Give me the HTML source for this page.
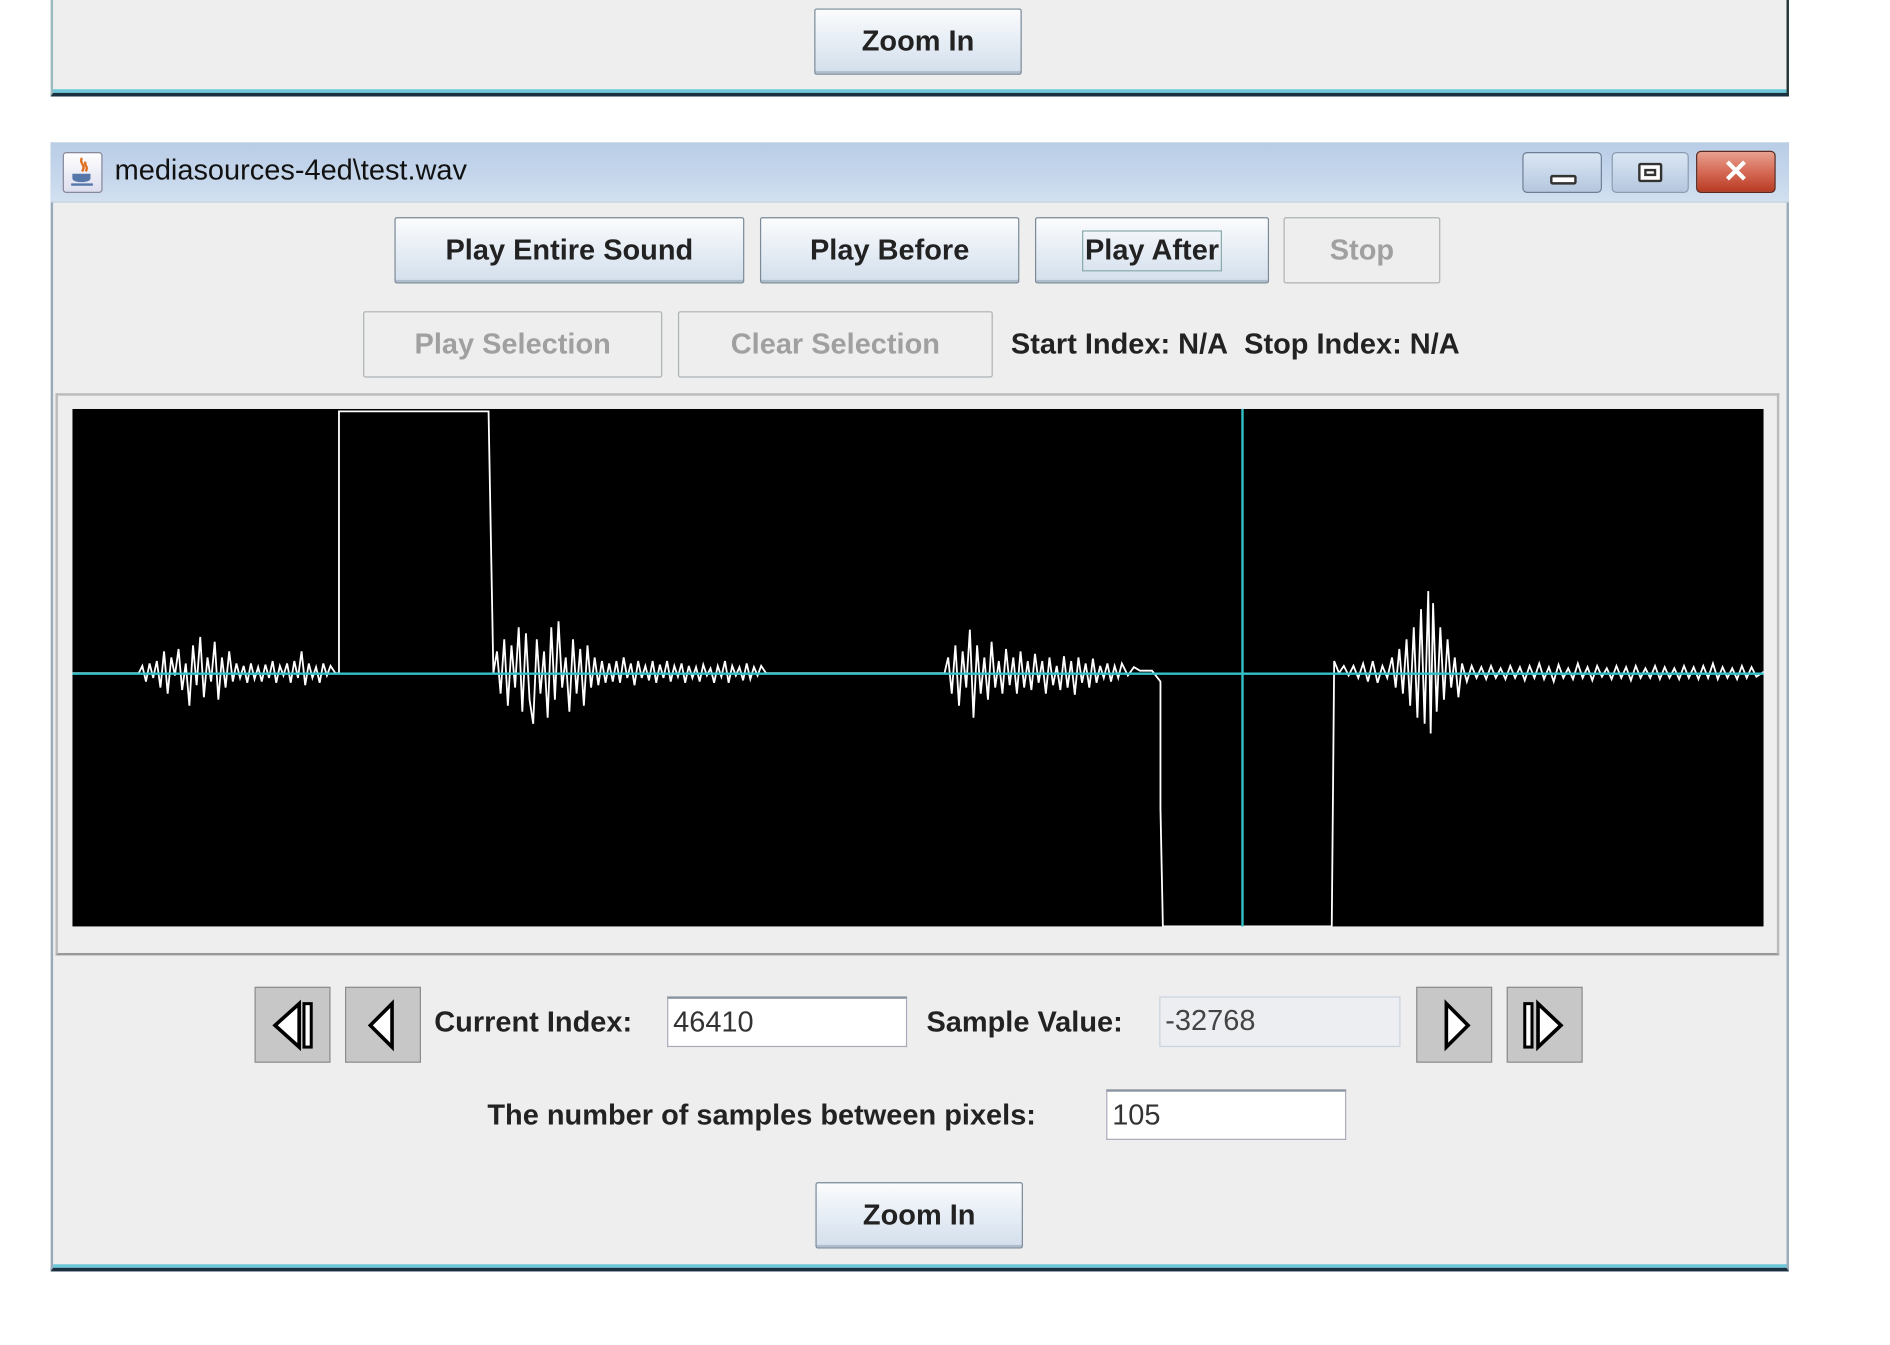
<!DOCTYPE html>
<html><head><meta charset="utf-8"><style>
html,body{margin:0;padding:0;background:#fff;width:1890px;height:1345px;overflow:hidden}
#s{position:absolute;left:0;top:0;width:1567px;height:1115px;transform:scale(1.2063);transform-origin:0 0;font-family:"Liberation Sans",Arial,sans-serif}
.a{position:absolute;box-sizing:border-box}
.btn{position:absolute;box-sizing:border-box;border:1px solid #7a8a99;border-radius:2px;background:linear-gradient(#fbfcfd,#e6edf5 50%,#d3dfec);font-weight:bold;font-size:24px;color:#222;display:flex;align-items:center;justify-content:center;box-shadow:inset 0 -2px 0 #aebccb}
.dis{background:#eeeeee;border-color:#adb2b5;color:#a0a0a0;box-shadow:none}
.lbl{position:absolute;font-weight:bold;font-size:24px;color:#222;white-space:nowrap}
.tf{position:absolute;box-sizing:border-box;background:#fff;border:1px solid #aab;border-top:2px solid #8a94a0;font-size:24px;color:#333;padding-left:4px;display:flex;align-items:center}
.nav{position:absolute;box-sizing:border-box;background:#c7c7c7;border:1px solid #8c8c8c;width:63px;height:63px}
</style></head><body><div id="s">
<div class="a" style="left:42px;top:0;width:1441px;height:80px;background:#eeeeee;border-left:2px solid #9bb;border-right:2px solid #233;border-bottom:3px solid #1a3040;box-shadow:inset 0 -3px 0 #6cc8d8"></div>
<div class="btn" style="left:675px;top:7px;width:172px;height:55px">Zoom In</div>

<div class="a" style="left:42px;top:118px;width:1441px;height:936px;background:#eeeeee;border-left:2px solid #9ab;border-right:2px solid #9ab;border-bottom:3px solid #1a3040;box-shadow:inset 0 -3px 0 #6cc8d8"></div>
<div class="a" style="left:42px;top:118px;width:1441px;height:50px;background:linear-gradient(#b9cde6,#c6d7ec 60%,#d2e0f0);border-bottom:1px solid #c0cfe0"></div>
<div class="a" style="left:52px;top:126px;width:33px;height:34px;background:linear-gradient(#fff,#dde);border:1px solid #889;border-radius:3px"><svg width="31" height="32" viewBox="0 0 31 32"><path d="M15 4c-3 4 4 6 0 11M18 7c-2 3 3 4 0 8" stroke="#e07020" stroke-width="2" fill="none"/><path d="M7 17h15v4c0 4-15 4-15 0z" fill="#5577aa"/><path d="M6 26h18" stroke="#5577aa" stroke-width="2"/></svg></div>
<div class="a" style="left:95px;top:128px;font-size:24px;color:#111">mediasources-4ed\test.wav</div>
<div class="a" style="left:1262px;top:126px;width:66px;height:34px;border:1px solid #6f7f95;border-radius:4px;background:linear-gradient(#dbe6f3,#c8d7ea 50%,#b5c7de)"><div class="a" style="left:22px;top:18px;width:22px;height:8px;border:2px solid #333;border-radius:2px;background:#fff"></div></div>
<div class="a" style="left:1336px;top:126px;width:64px;height:34px;border:1px solid #8b9bb0;border-radius:4px;background:linear-gradient(#dbe6f3,#c8d7ea 50%,#b5c7de)"><div class="a" style="left:21px;top:8px;width:20px;height:16px;border:2px solid #333;border-radius:2px;background:#fff"><div class="a" style="left:3px;top:3px;width:10px;height:6px;border:2px solid #333"></div></div></div>
<div class="a" style="left:1406px;top:125px;width:66px;height:35px;border:1px solid #5a2a20;border-radius:4px;background:linear-gradient(#e8a090,#d56a55 50%,#b83a22);color:#fff;font-size:26px;font-weight:bold;text-align:center;line-height:33px">✕</div>

<div class="btn" style="left:327px;top:180px;width:290px;height:55px">Play Entire Sound</div>
<div class="btn" style="left:630px;top:180px;width:215px;height:55px">Play Before</div>
<div class="btn" style="left:858px;top:180px;width:194px;height:55px"><span style="border:1px solid #8aa;padding:2px 1px">Play After</span></div>
<div class="btn dis" style="left:1064px;top:180px;width:130px;height:55px">Stop</div>
<div class="btn dis" style="left:301px;top:258px;width:248px;height:55px">Play Selection</div>
<div class="btn dis" style="left:562px;top:258px;width:261px;height:55px">Clear Selection</div>
<div class="lbl" style="left:838px;top:272px">Start Index: N/A&nbsp; Stop Index: N/A</div>

<div class="a" style="left:46px;top:326px;width:1429px;height:466px;border:2px solid #bbb;border-bottom-color:#999"></div>
<svg class="a" style="left:60px;top:339px" width="1402" height="429" viewBox="60 339 1402 429">
<rect x="60" y="339" width="1402" height="429" fill="#000"/>
<path fill="none" stroke="#fff" stroke-width="1.5" d="M60,558 L115,558 L118,552 L121,565 L124,550 L127,562 L130,548 L133,570 L136,540 L139,575 L142,545 L145,560 L148,538 L151,572 L154,550 L157,585 L160,535 L163,568 L166,528 L169,578 L172,545 L175,565 L178,532 L181,580 L184,545 L187,570 L190,540 L193,565 L196,550 L199,562 L202,552 L205,566 L208,550 L211,563 L214,553 L217,565 L220,551 L223,562 L226,548 L229,566 L232,552 L235,560 L238,550 L241,566 L244,548 L247,562 L250,540 L253,568 L256,550 L259,562 L262,553 L265,566 L268,550 L271,560 L274,552 L278,558 L281,558 L281,341 L405,341 L407,450 L409,558 L412,540 L415,575 L418,530 L421,585 L424,535 L427,570 L430,520 L433,590 L436,525 L439,580 L442,600 L445,530 L448,575 L451,540 L454,595 L457,520 L460,580 L463,515 L466,570 L469,545 L472,590 L475,530 L478,575 L481,538 L484,585 L487,535 L490,570 L493,545 L496,568 L499,548 L502,566 L505,550 L508,565 L511,548 L514,566 L517,545 L520,562 L523,550 L526,568 L529,548 L532,562 L535,552 L538,564 L541,548 L544,566 L547,551 L550,562 L553,548 L556,565 L559,552 L562,561 L565,550 L568,566 L571,552 L574,562 L577,553 L580,565 L583,551 L586,560 L589,554 L592,566 L595,552 L598,561 L601,548 L604,566 L607,552 L610,560 L613,553 L616,564 L619,550 L622,563 L625,553 L628,560 L631,552 L635,558 L783,558 L786,545 L789,575 L792,535 L795,585 L798,540 L801,570 L804,522 L807,595 L810,535 L813,575 L816,545 L819,580 L822,532 L825,570 L828,548 L831,575 L834,538 L837,568 L840,545 L843,575 L846,540 L849,570 L852,548 L855,572 L858,542 L861,566 L864,548 L867,575 L870,545 L873,568 L876,552 L879,572 L882,544 L885,570 L888,548 L891,576 L894,545 L897,566 L900,550 L903,570 L906,546 L909,566 L912,552 L915,562 L918,550 L921,565 L924,552 L927,562 L930,550 L935,560 L940,553 L945,556 L955,556 L962,565 L962,670 L964,768 L1104,768 L1105,660 L1106,548 L1110,558 L1114,552 L1118,560 L1122,552 L1126,562 L1130,550 L1134,565 L1138,548 L1142,566 L1146,552 L1150,562 L1154,545 L1157,570 L1160,538 L1163,575 L1166,530 L1169,585 L1172,520 L1175,595 L1178,505 L1181,600 L1184,490 L1186,608 L1188,500 L1191,590 L1194,520 L1197,580 L1200,530 L1203,570 L1206,545 L1209,578 L1212,550 L1216,565 L1220,552 L1224,562 L1228,553 L1232,563 L1236,552 L1240,562 L1244,554 L1248,563 L1252,552 L1256,562 L1260,553 L1264,564 L1268,552 L1272,562 L1276,550 L1280,563 L1284,553 L1288,565 L1292,551 L1296,562 L1300,554 L1304,563 L1308,550 L1312,562 L1316,553 L1320,564 L1324,552 L1328,561 L1332,554 L1336,563 L1340,552 L1344,562 L1348,553 L1352,564 L1356,552 L1360,562 L1364,554 L1368,562 L1372,552 L1376,563 L1380,553 L1384,562 L1388,554 L1392,563 L1396,552 L1400,562 L1404,553 L1408,563 L1412,552 L1416,562 L1420,550 L1424,563 L1428,553 L1432,562 L1436,554 L1440,563 L1444,552 L1448,562 L1452,553 L1456,561 L1462,557"/>
<path d="M60,558.5H1462M1030,339V768" stroke="#33c0c8" stroke-width="2"/>
</svg>

<div class="nav" style="left:211px;top:818px"><svg width="61" height="61"><path d="M16 31L36 13V49Z" fill="#fff" stroke="#000" stroke-width="3"/><rect x="40" y="13" width="6" height="36" fill="#fff" stroke="#000" stroke-width="2.5"/></svg></div>
<div class="nav" style="left:286px;top:818px"><svg width="61" height="61"><path d="M20 31L38 13V49Z" fill="#fff" stroke="#000" stroke-width="3"/></svg></div>
<div class="lbl" style="left:360px;top:834px">Current Index:</div>
<div class="tf" style="left:553px;top:826px;width:199px;height:42px">46410</div>
<div class="lbl" style="left:768px;top:834px">Sample Value:</div>
<div class="tf" style="left:961px;top:826px;width:200px;height:42px;background:#eceef2;border:1px solid #c9d3de;color:#444">-32768</div>
<div class="nav" style="left:1174px;top:818px"><svg width="61" height="61"><path d="M42 31L24 13V49Z" fill="#fff" stroke="#000" stroke-width="3"/></svg></div>
<div class="nav" style="left:1249px;top:818px"><svg width="61" height="61"><rect x="14" y="13" width="6" height="36" fill="#fff" stroke="#000" stroke-width="2.5"/><path d="M44 31L25 13V49Z" fill="#fff" stroke="#000" stroke-width="3"/></svg></div>

<div class="lbl" style="left:404px;top:911px">The number of samples between pixels:</div>
<div class="tf" style="left:917px;top:903px;width:199px;height:42px">105</div>
<div class="btn" style="left:676px;top:980px;width:172px;height:55px">Zoom In</div>
</div></body></html>
